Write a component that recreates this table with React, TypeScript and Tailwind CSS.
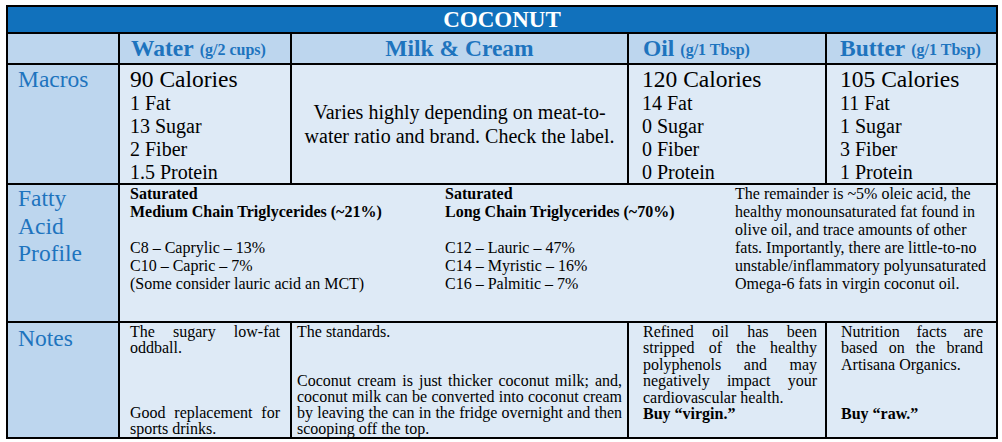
import type { ReactNode } from 'react';

const HEAD = 'text-[#1E74BE]';

// one line of a justified paragraph: spread across the cell, like Word does
function J({ children }: { children: ReactNode }) {
  return <div className="text-justify [text-align-last:justify]">{children}</div>;
}

function Label({ children }: { children: ReactNode }) {
  return <div className={`bg-[#BDD6EE] pl-[10px] text-[23.5px] ${HEAD}`}>{children}</div>;
}

function Macros({ cal, rows, pad }: { cal: string; rows: string[]; pad: string }) {
  return (
    <div className={`overflow-hidden bg-[#DEEAF6] pt-[1px] ${pad}`}>
      <div className="text-[23.5px] leading-[26px]">{cal}</div>
      {rows.map((r) => (
        <div key={r} className="text-[20px] leading-[23px]">{r}</div>
      ))}
    </div>
  );
}

export default function App() {
  return (
    <div className="min-h-[442px] bg-white pt-[5px] pl-[6px] font-['Liberation_Serif',serif] text-black">
      <div className="grid w-[992px] grid-cols-[110px_170px_335px_196px_169px] grid-rows-[25px_29px_118px_136px_114px] gap-[2px] bg-black p-[2px]">
        {/* title */}
        <div className="col-span-5 flex items-center justify-center bg-[#1171BC] pt-[2px] text-[23px] font-bold text-white">
          COCONUT
        </div>

        {/* column heads */}
        <div className="bg-[#BDD6EE]" />
        <div className={`flex items-center bg-[#BDD6EE] pl-[11px] font-bold ${HEAD}`}>
          <span className="text-[23.5px]">Water</span>
          <span className="ml-[6px] mt-[3px] text-[16px]">(g/2 cups)</span>
        </div>
        <div className={`flex items-center justify-center bg-[#BDD6EE] text-[23.5px] font-bold ${HEAD}`}>
          Milk &amp; Cream
        </div>
        <div className={`flex items-center bg-[#BDD6EE] pl-[14px] font-bold ${HEAD}`}>
          <span className="text-[23.5px]">Oil</span>
          <span className="ml-[6px] mt-[3px] text-[16px]">(g/1 Tbsp)</span>
        </div>
        <div className={`flex items-center bg-[#BDD6EE] pl-[13px] font-bold ${HEAD}`}>
          <span className="text-[23.5px]">Butter</span>
          <span className="ml-[6px] mt-[3px] text-[16px]">(g/1 Tbsp)</span>
        </div>

        {/* macros */}
        <Label>
          <div className="pt-[1px] leading-[26px]">Macros</div>
        </Label>
        <Macros pad="pl-[10px]" cal="90 Calories" rows={['1 Fat', '13 Sugar', '2 Fiber', '1.5 Protein']} />
        <div className="flex items-center justify-center bg-[#DEEAF6] text-center text-[20px] leading-[24px]">
          <div>
            Varies highly depending on meat-to-
            <br />
            water ratio and brand. Check the label.
          </div>
        </div>
        <Macros pad="pl-[13px]" cal="120 Calories" rows={['14 Fat', '0 Sugar', '0 Fiber', '0 Protein']} />
        <Macros pad="pl-[13px]" cal="105 Calories" rows={['11 Fat', '1 Sugar', '3 Fiber', '1 Protein']} />

        {/* fatty acid profile */}
        <Label>
          <div className="leading-[27.5px]">
            Fatty
            <br />
            Acid
            <br />
            Profile
          </div>
        </Label>
        <div className="col-span-4 flex bg-[#DEEAF6] pl-[10px] text-[16px] leading-[18px]">
          <div className="w-[315px] shrink-0">
            <div className="font-bold">Saturated</div>
            <div className="font-bold">Medium Chain Triglycerides (~21%)</div>
            <div className="h-[18px]" />
            <div>C8 – Caprylic – 13%</div>
            <div>C10 – Capric – 7%</div>
            <div>(Some consider lauric acid an MCT)</div>
          </div>
          <div className="w-[290px] shrink-0">
            <div className="font-bold">Saturated</div>
            <div className="font-bold">Long Chain Triglycerides (~70%)</div>
            <div className="h-[18px]" />
            <div>C12 – Lauric – 47%</div>
            <div>C14 – Myristic – 16%</div>
            <div>C16 – Palmitic – 7%</div>
          </div>
          <div>
            <div>The remainder is ~5% oleic acid, the</div>
            <div>healthy monounsaturated fat found in</div>
            <div>olive oil, and trace amounts of other</div>
            <div>fats. Importantly, there are little-to-no</div>
            <div>unstable/inflammatory polyunsaturated</div>
            <div>Omega-6 fats in virgin coconut oil.</div>
          </div>
        </div>

        {/* notes */}
        <Label>
          <div className="pt-[2px] leading-[26px]">Notes</div>
        </Label>
        <div className="flex flex-col justify-between bg-[#DEEAF6] px-[10px] pt-[1px] text-[16px] leading-[16px]">
          <div>
            <J>The sugary low-fat</J>
            <div>oddball.</div>
          </div>
          <div>
            <J>Good replacement for</J>
            <div>sports drinks.</div>
          </div>
        </div>
        <div className="flex flex-col justify-between bg-[#DEEAF6] px-[5px] pt-[1px] text-[16px] leading-[16px]">
          <div>The standards.</div>
          <div>
            <J>Coconut cream is just thicker coconut milk; and,</J>
            <J>coconut milk can be converted into coconut cream</J>
            <J>by leaving the can in the fridge overnight and then</J>
            <div>scooping off the top.</div>
          </div>
        </div>
        <div className="bg-[#DEEAF6] pt-[1px] pr-[8px] pl-[14px] text-[16px] leading-[16.4px]">
          <J>Refined oil has been</J>
          <J>stripped of the healthy</J>
          <J>polyphenols and may</J>
          <J>negatively impact your</J>
          <div>cardiovascular health.</div>
          <div className="font-bold">Buy “virgin.”</div>
        </div>
        <div className="bg-[#DEEAF6] pt-[1px] pr-[13px] pl-[14px] text-[16px] leading-[16.4px]">
          <J>Nutrition facts are</J>
          <J>based on the brand</J>
          <div>Artisana Organics.</div>
          <div className="mt-[33px] font-bold">Buy “raw.”</div>
        </div>
      </div>
    </div>
  );
}
